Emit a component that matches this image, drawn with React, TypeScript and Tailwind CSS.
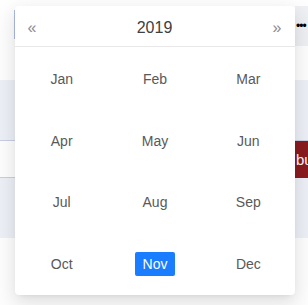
import React from 'react';

const MONTHS = ['Jan', 'Feb', 'Mar', 'Apr', 'May', 'Jun', 'Jul', 'Aug', 'Sep', 'Oct', 'Nov', 'Dec'];

const MonthPanel: React.FC<{ year: number; selected: string }> = ({ year, selected }) => {
  return (
    <div className="absolute left-[15px] top-[6px] w-[280px] h-[289px] bg-white rounded-[4px] shadow-[0_3px_6px_-4px_rgba(0,0,0,0.12),0_6px_16px_0_rgba(0,0,0,0.08),0_9px_28px_8px_rgba(0,0,0,0.05)] flex flex-col">
      {/* header */}
      <div className="h-[41px] flex items-center justify-between pl-[11px] pr-[12px] pt-[3px] border-b border-[#e8e8e8]">
        <button className="w-[12px] text-[16px] leading-none text-[#8c8c8c]">«</button>
        <span className="text-[16px] text-[#404040]">{year}</span>
        <button className="w-[12px] text-[16px] leading-none text-[#8c8c8c]">»</button>
      </div>

      {/* months */}
      <div className="grid grid-cols-3 grid-rows-4 flex-1 pt-px">
        {MONTHS.map((m) => (
          <div key={m} className="flex items-center justify-center">
            {m === selected ? (
              <span className="inline-block h-6 leading-6 px-[8px] rounded-[2px] bg-[#1a7cff] text-white text-[14px]">{m}</span>
            ) : (
              <span className="inline-block h-6 leading-6 px-[8px] text-[14px] text-[#595959]">{m}</span>
            )}
          </div>
        ))}
      </div>
    </div>
  );
};

export default function App() {
  return (
    <div className="relative w-[308px] h-[305px] overflow-hidden bg-white" style={{ fontFamily: '"Liberation Sans", Arial, sans-serif' }}>
      {/* page behind the popup */}
      <div className="h-[80px] flex justify-between">
        <div className="mt-[10px] ml-[14px] w-[40px] h-[29px] border-l border-[#aebce8]" />
        <div className="mt-[6px] w-[13px] h-[40px] bg-[#f0f1f4] flex items-center">
          <span className="text-[12px] leading-none tracking-[-1px] text-black pl-px">•••</span>
        </div>
      </div>
      <div className="h-[61px] bg-[#eef1f7] border-b border-[#c9d0e6]" />
      <div className="h-[37px] flex border-b border-[#c9d0e6]">
        <div className="ml-[270px] flex-1 h-[37px] bg-[#8b1c1f] text-white text-[15px] leading-[37px] pl-[26px] whitespace-nowrap overflow-hidden">
          build
        </div>
      </div>
      <div className="h-[60px] bg-[#eef1f7]" />

      <MonthPanel year={2019} selected="Nov" />
    </div>
  );
}
